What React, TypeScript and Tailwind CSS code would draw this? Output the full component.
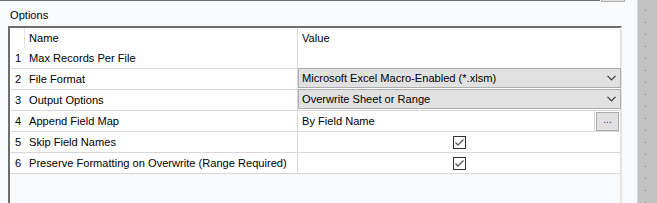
import React from 'react';

type Row = {
  num: number;
  name: string;
  kind: 'empty' | 'combo' | 'text' | 'check';
  value?: string;
};

const rows: Row[] = [
  { num: 1, name: 'Max Records Per File', kind: 'empty' },
  { num: 2, name: 'File Format', kind: 'combo', value: 'Microsoft Excel Macro-Enabled (*.xlsm)' },
  { num: 3, name: 'Output Options', kind: 'combo', value: 'Overwrite Sheet or Range' },
  { num: 4, name: 'Append Field Map', kind: 'text', value: 'By Field Name' },
  { num: 5, name: 'Skip Field Names', kind: 'check' },
  { num: 6, name: 'Preserve Formatting on Overwrite (Range Required)', kind: 'check' },
];

function Chevron() {
  return (
    <svg width="9" height="6" viewBox="0 0 9 6" className="shrink-0">
      <path d="M0.5 0.8 L4.5 4.8 L8.5 0.8" fill="none" stroke="#3a3a3a" strokeWidth="1.2" />
    </svg>
  );
}

function CheckBox() {
  return (
    <div className="w-[13px] h-[13px] border border-[#333333] bg-white flex items-center justify-center">
      <svg width="11" height="11" viewBox="0 0 11 11">
        <path d="M1.5 5.5 L4 8 L9.5 2.5" fill="none" stroke="#5a5a5a" strokeWidth="1.3" />
      </svg>
    </div>
  );
}

function ValueCell({ row }: { row: Row }) {
  if (row.kind === 'combo') {
    return (
      <div className="flex-1 h-full -my-px -mr-px border border-[#adadad] bg-[#e1e1e1] flex items-center pl-[3px] pr-[4px]">
        <span className="flex-1 truncate">{row.value}</span>
        <Chevron />
      </div>
    );
  }
  if (row.kind === 'text') {
    return (
      <div className="flex-1 h-full flex items-center">
        <span className="flex-1 pl-[4px]">{row.value}</span>
        <div className="h-full border-l border-[#d8d8d8] flex items-center pl-[1px] pr-[1px]">
          <div className="w-[23px] h-[19px] border border-[#adadad] bg-[#e1e1e1] flex items-center justify-center text-[10px] leading-none text-[#5a1d7a] pb-[3px]">
            ...
          </div>
        </div>
      </div>
    );
  }
  if (row.kind === 'check') {
    return (
      <div className="flex-1 h-full flex items-center justify-center">
        <CheckBox />
      </div>
    );
  }
  return <div className="flex-1 h-full" />;
}

export default function App() {
  return (
    <div
      className="w-[657px] h-[203px] bg-[#f9fafc] flex overflow-hidden text-[11.1px] text-black"
      style={{ fontFamily: '"Liberation Sans", Arial, sans-serif' }}
    >
      {/* Main panel */}
      <div className="w-[637px] h-full flex flex-col">
        <div className="flex h-[2px]">
          <div className="w-[600px] h-px bg-[#6d6d6d]" />
          <div className="ml-px w-[24px] h-[2px] border-x border-b border-[#adadad] bg-[#e1e1e1]" />
        </div>

        <div className="h-[24px] pl-[10px] flex items-center pt-[2px]">Options</div>

        {/* Grid */}
        <div className="ml-[8px] w-[614px] flex-1 border-l-2 border-t-2 border-l-[#6d6d6d] border-t-[#6d6d6d] border-r-2 border-r-[#e3e3e3] bg-[#f8f9fb] flex flex-col">
          {/* Header */}
          <div className="h-[20px] flex bg-white">
            <div className="w-[15px] h-full border-r border-[#e3e3e3]" />
            <div className="w-[272px] h-full flex items-center pl-[4px]">Name</div>
            <div className="flex-1 h-full flex items-center pl-[4px] border-l border-[#d8d8d8]">Value</div>
          </div>
          {rows.map((row) => (
            <div key={row.num} className="h-[21px] flex bg-white border-b border-[#d8d8d8]">
              <div className="w-[15px] h-full flex items-center justify-center pl-[1px]">{row.num}</div>
              <div className="w-[272px] h-full flex items-center pl-[4px] whitespace-nowrap">{row.name}</div>
              <div className="flex-1 h-full flex border-l border-[#d8d8d8]">
                <ValueCell row={row} />
              </div>
            </div>
          ))}
        </div>
      </div>

      {/* Right strip */}
      <div className="w-px h-full bg-[#d3dcea]" />
      <div className="flex-1 h-full bg-[#c2c2c2] flex flex-col items-center pt-[10px] gap-[11px] pr-[4px]">
        {Array.from({ length: 17 }).map((_, i) => (
          <div key={i} className="w-px h-px bg-[#7f7f7f]" />
        ))}
      </div>
    </div>
  );
}
